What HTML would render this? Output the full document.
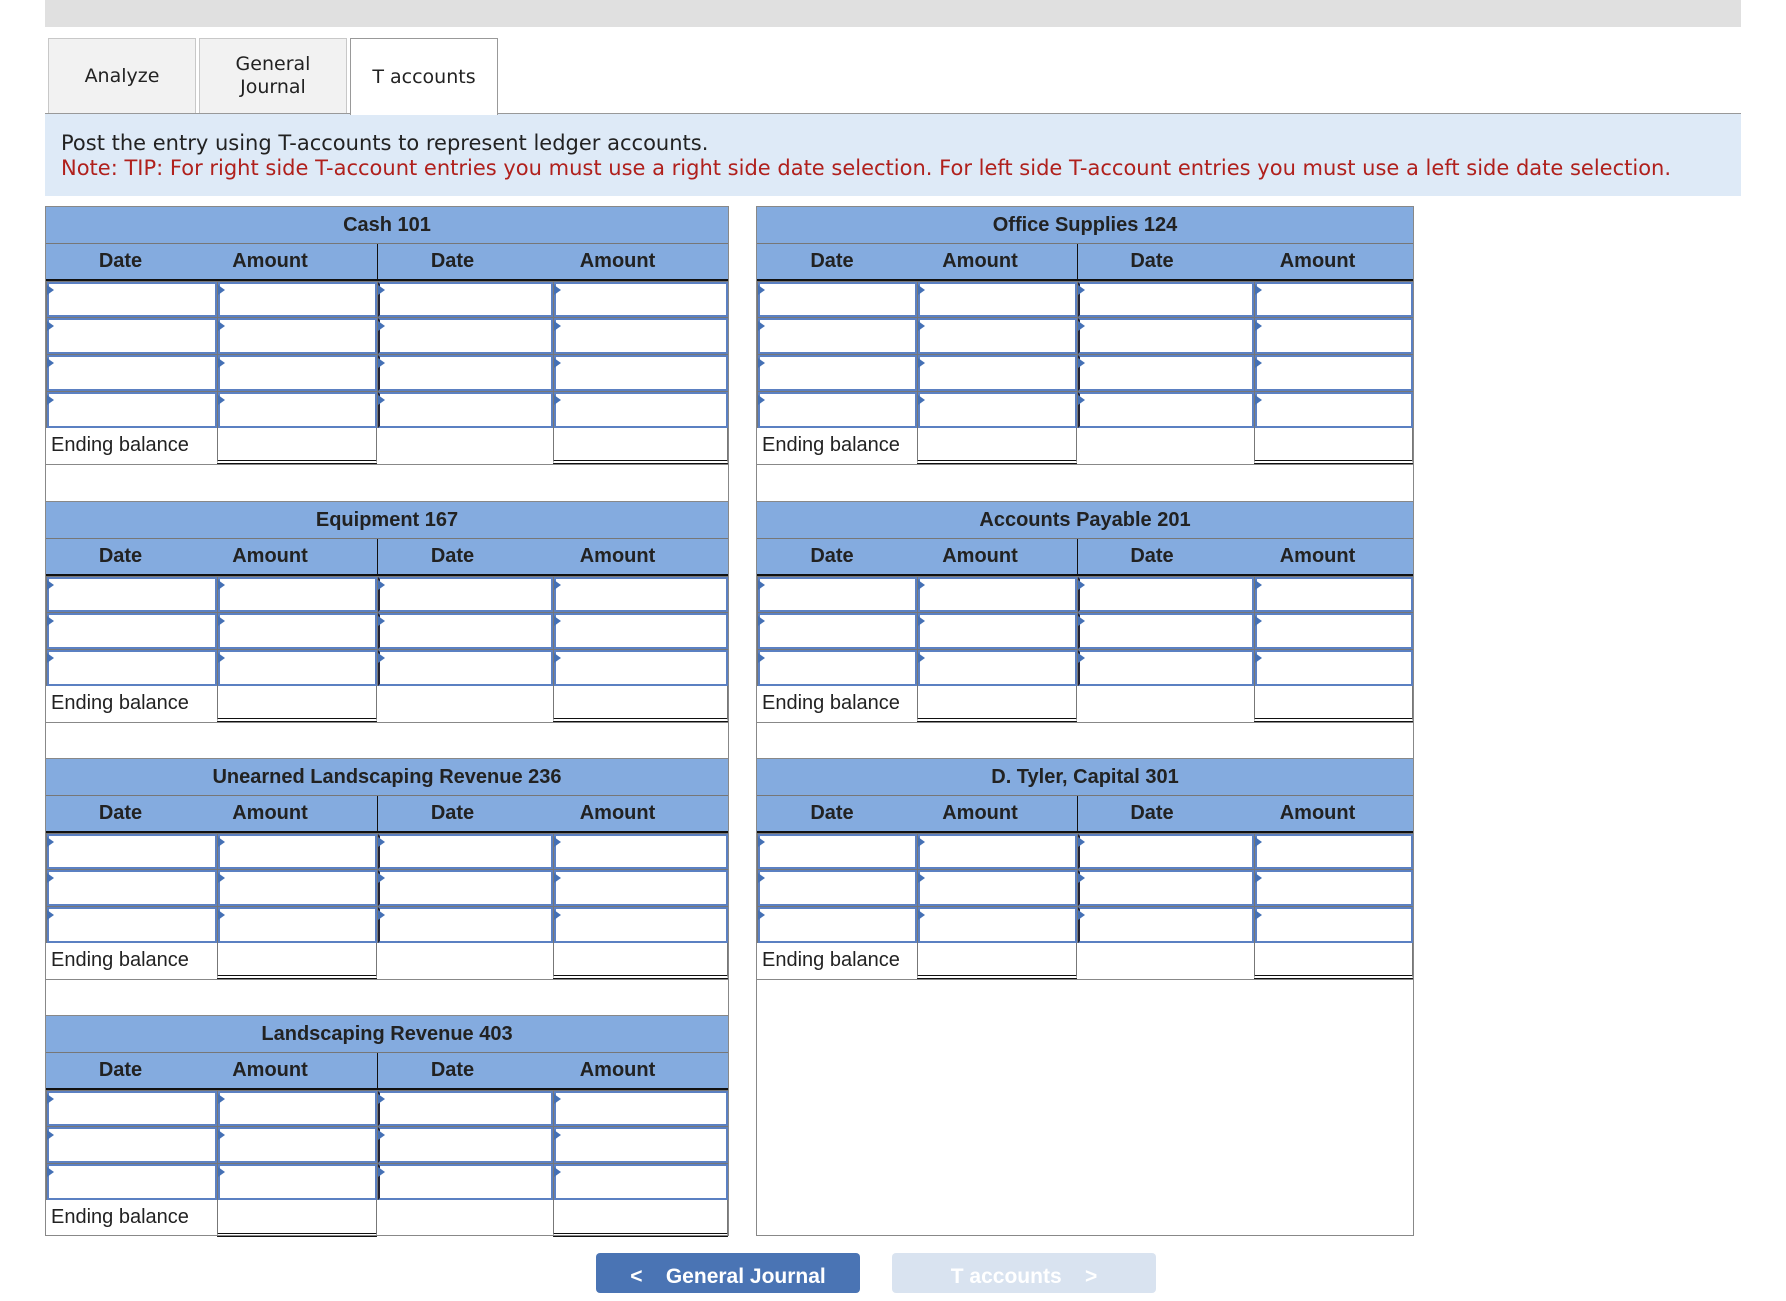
<!DOCTYPE html>
<html><head><meta charset="utf-8"><style>
*{box-sizing:border-box;margin:0;padding:0}
body{width:1786px;height:1284px;background:#fff;position:relative;overflow:hidden;font-family:"Liberation Sans",Arial,sans-serif;color:#222}
.bar{position:absolute;left:45px;top:0;width:1696px;height:27px;background:#e0e0e0}
.tab{position:absolute;top:38px;height:76px;width:148px;border:1px solid #c8c8c8;background:#f2f2f2;font-family:"DejaVu Sans",sans-serif;font-size:19px;display:flex;align-items:center;justify-content:center;text-align:center;line-height:23px;color:#222}
.tab.act{background:#fff;border-color:#999;border-bottom:none;height:77px;z-index:2}
.info{position:absolute;left:45px;top:113px;width:1696px;height:83px;background:#deeaf7;border-top:1px solid #999;font-family:"DejaVu Sans",sans-serif;font-size:21px;padding:17px 0 0 16px;line-height:25px;white-space:nowrap}
.info .n{color:#b0201c}
.frame{position:absolute;top:206px;height:1030px;border:1px solid #888}
.blk{position:absolute;left:0;width:100%}
.ti{height:37px;background:#84abdf;border-bottom:1px solid #777;font-weight:bold;font-size:20px;text-align:center;line-height:36px}
.hd{height:37px;background:#84abdf;display:grid;font-weight:bold;font-size:20px;border-bottom:2px solid #111}
.hd span{display:block;text-align:center;line-height:34px}
.hd span:nth-child(3){border-left:1.5px solid #111}
.L .hd span:nth-child(1){padding-right:22px}
.L .hd span:nth-child(2){padding-right:54px}
.L .hd span:nth-child(3){padding-right:26px}
.L .hd span:nth-child(4){padding-right:46px}
.R .hd span:nth-child(1){padding-right:10px}
.R .hd span:nth-child(2){padding-right:34px}
.R .hd span:nth-child(3){padding-right:28px}
.R .hd span:nth-child(4){padding-right:32px}
.r{height:36.8px;display:grid;background:#777}
.r i{display:block;background:#fff;border:2px solid #5b80c2;margin:0.5px;position:relative}
.r i:nth-child(3){border-left:2px solid #223}
.r i:before{content:"";position:absolute;left:-2px;top:1px;border-left:7px solid #4470b5;border-top:5px solid transparent;border-bottom:5px solid transparent}
.eb{height:37px;display:grid;border-bottom:1px solid #888;font-size:20px}
.eb b{font-weight:normal;padding-left:5px;line-height:34px}
.eb u{display:block;border-left:1px solid #777;border-right:1px solid #777;border-bottom:4px double #111;text-decoration:none}
.eb em{display:block}
.L .hd,.L .r,.L .eb{grid-template-columns:171px 160px 176px 1fr}
.R .hd,.R .r,.R .eb{grid-template-columns:160px 160px 177px 1fr}
.btn{position:absolute;top:1253px;height:40px;width:264px;border-radius:4px;color:#fff;font-weight:bold;font-size:21px;text-align:center;line-height:48px}
</style></head><body>
<div class="bar"></div>
<div class="tab" style="left:48px">Analyze</div>
<div class="tab" style="left:199px">General<br>Journal</div>
<div class="tab act" style="left:350px">T accounts</div>
<div class="info">Post the entry using T-accounts to represent ledger accounts.<br><span class="n">Note: TIP: For right side T-account entries you must use a right side date selection. For left side T-account entries you must use a left side date selection.</span></div>

<div class="frame L" style="left:45px;width:684px">
 <div class="blk" style="top:0">
  <div class="ti">Cash 101</div>
  <div class="hd"><span>Date</span><span>Amount</span><span>Date</span><span>Amount</span></div>
  <div class="r"><i></i><i></i><i></i><i></i></div><div class="r"><i></i><i></i><i></i><i></i></div><div class="r"><i></i><i></i><i></i><i></i></div><div class="r"><i></i><i></i><i></i><i></i></div>
  <div class="eb"><b>Ending balance</b><u></u><em></em><u></u></div>
 </div>
 <div class="blk" style="top:294px;border-top:1px solid #888">
  <div class="ti">Equipment 167</div>
  <div class="hd"><span>Date</span><span>Amount</span><span>Date</span><span>Amount</span></div>
  <div class="r"><i></i><i></i><i></i><i></i></div><div class="r"><i></i><i></i><i></i><i></i></div><div class="r"><i></i><i></i><i></i><i></i></div>
  <div class="eb"><b>Ending balance</b><u></u><em></em><u></u></div>
 </div>
 <div class="blk" style="top:551px;border-top:1px solid #888">
  <div class="ti">Unearned Landscaping Revenue 236</div>
  <div class="hd"><span>Date</span><span>Amount</span><span>Date</span><span>Amount</span></div>
  <div class="r"><i></i><i></i><i></i><i></i></div><div class="r"><i></i><i></i><i></i><i></i></div><div class="r"><i></i><i></i><i></i><i></i></div>
  <div class="eb"><b>Ending balance</b><u></u><em></em><u></u></div>
 </div>
 <div class="blk" style="top:808px;border-top:1px solid #888">
  <div class="ti">Landscaping Revenue 403</div>
  <div class="hd"><span>Date</span><span>Amount</span><span>Date</span><span>Amount</span></div>
  <div class="r"><i></i><i></i><i></i><i></i></div><div class="r"><i></i><i></i><i></i><i></i></div><div class="r"><i></i><i></i><i></i><i></i></div>
  <div class="eb" style="border-bottom:none"><b>Ending balance</b><u></u><em></em><u></u></div>
 </div>
</div>

<div class="frame R" style="left:756px;width:658px">
 <div class="blk" style="top:0">
  <div class="ti">Office Supplies 124</div>
  <div class="hd"><span>Date</span><span>Amount</span><span>Date</span><span>Amount</span></div>
  <div class="r"><i></i><i></i><i></i><i></i></div><div class="r"><i></i><i></i><i></i><i></i></div><div class="r"><i></i><i></i><i></i><i></i></div><div class="r"><i></i><i></i><i></i><i></i></div>
  <div class="eb"><b>Ending balance</b><u></u><em></em><u></u></div>
 </div>
 <div class="blk" style="top:294px;border-top:1px solid #888">
  <div class="ti">Accounts Payable 201</div>
  <div class="hd"><span>Date</span><span>Amount</span><span>Date</span><span>Amount</span></div>
  <div class="r"><i></i><i></i><i></i><i></i></div><div class="r"><i></i><i></i><i></i><i></i></div><div class="r"><i></i><i></i><i></i><i></i></div>
  <div class="eb"><b>Ending balance</b><u></u><em></em><u></u></div>
 </div>
 <div class="blk" style="top:551px;border-top:1px solid #888">
  <div class="ti">D. Tyler, Capital 301</div>
  <div class="hd"><span>Date</span><span>Amount</span><span>Date</span><span>Amount</span></div>
  <div class="r"><i></i><i></i><i></i><i></i></div><div class="r"><i></i><i></i><i></i><i></i></div><div class="r"><i></i><i></i><i></i><i></i></div>
  <div class="eb"><b>Ending balance</b><u></u><em></em><u></u></div>
 </div>
</div>

<div class="btn" style="left:596px;background:#4a74b4">&lt;&nbsp;&nbsp;&nbsp;&nbsp;General Journal</div>
<div class="btn" style="left:892px;background:#d9e3f0">T accounts&nbsp;&nbsp;&nbsp;&nbsp;&gt;</div>
</body></html>
